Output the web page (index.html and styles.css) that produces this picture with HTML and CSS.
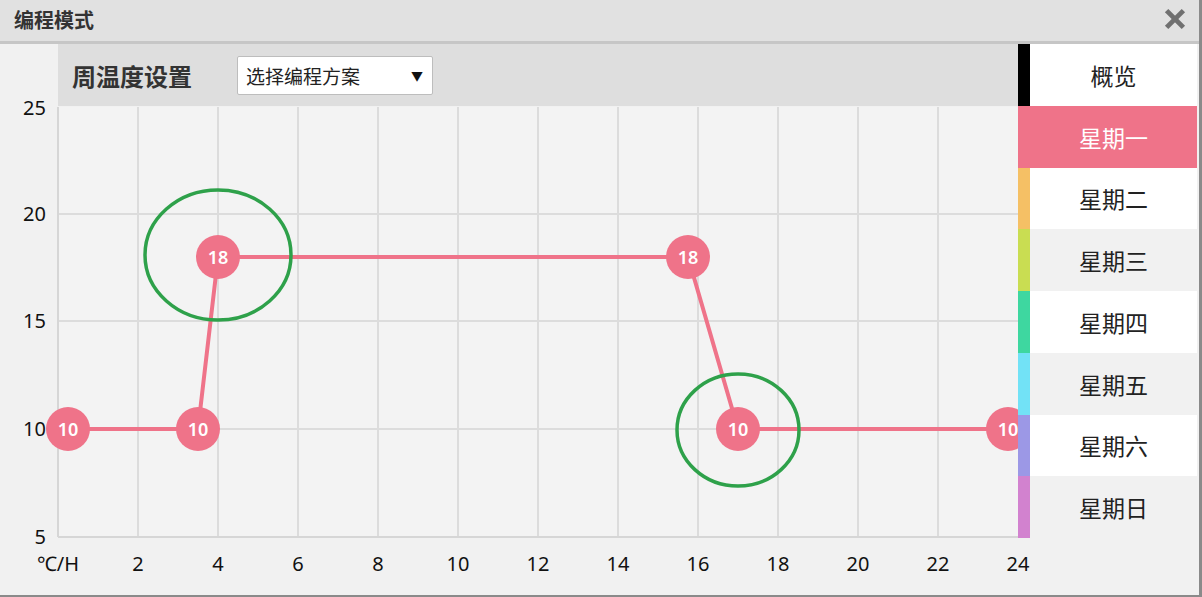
FILE: index.html
```html
<!DOCTYPE html>
<html lang="zh-CN">
<head>
  <meta charset="UTF-8">
  <title>编程模式</title>
  <link rel="stylesheet" href="styles.css">
</head>
<body>
  <div class="window">
    <!-- Title bar -->
    <div class="title-bar">
      <span class="title">编程模式</span>
      <a class="close-button">
        <svg viewBox="0 0 20 20" xmlns="http://www.w3.org/2000/svg">
          <line x1="3" y1="3" x2="17" y2="17" />
          <line x1="17" y1="3" x2="3" y2="17" />
        </svg>
      </a>
    </div>

    <div class="content">
      <div class="chart-area">
        <div class="chart-header">
          <span class="chart-title">周温度设置</span>
          <div class="plan-select">
            <span>选择编程方案</span>
            <span class="arrow">&#9660;</span>
          </div>
        </div>

        <svg class="chart" width="1018" height="489" viewBox="0 0 1018 489" xmlns="http://www.w3.org/2000/svg">
          <!-- plot background -->
          <rect x="58" y="1" width="960" height="430" fill="#f3f3f3" />

          <!-- grid: one vertical line per 2 hours -->
          <g class="grid">
            <line x1="138" y1="1" x2="138" y2="431" />
            <line x1="218" y1="1" x2="218" y2="431" />
            <line x1="298" y1="1" x2="298" y2="431" />
            <line x1="378" y1="1" x2="378" y2="431" />
            <line x1="458" y1="1" x2="458" y2="431" />
            <line x1="538" y1="1" x2="538" y2="431" />
            <line x1="618" y1="1" x2="618" y2="431" />
            <line x1="698" y1="1" x2="698" y2="431" />
            <line x1="778" y1="1" x2="778" y2="431" />
            <line x1="858" y1="1" x2="858" y2="431" />
            <line x1="938" y1="1" x2="938" y2="431" />
            <line x1="58" y1="108" x2="1018" y2="108" />
            <line x1="58" y1="215" x2="1018" y2="215" />
            <line x1="58" y1="323" x2="1018" y2="323" />
          </g>
          <g class="axis">
            <line x1="58" y1="1" x2="58" y2="431" />
            <line x1="58" y1="431" x2="1018" y2="431" />
          </g>

          <!-- y labels -->
          <g class="y-labels">
            <text x="46" y="9">25</text>
            <text x="46" y="115">20</text>
            <text x="46" y="222">15</text>
            <text x="46" y="330">10</text>
            <text x="46" y="438">5</text>
          </g>

          <!-- x labels -->
          <g class="x-labels">
            <text x="58" y="465">℃/H</text>
            <text x="138" y="465">2</text>
            <text x="218" y="465">4</text>
            <text x="298" y="465">6</text>
            <text x="378" y="465">8</text>
            <text x="458" y="465">10</text>
            <text x="538" y="465">12</text>
            <text x="618" y="465">14</text>
            <text x="698" y="465">16</text>
            <text x="778" y="465">18</text>
            <text x="858" y="465">20</text>
            <text x="938" y="465">22</text>
            <text x="1018" y="465">24</text>
          </g>

          <!-- temperature curve -->
          <polyline class="curve" points="68,323 198,323 218,151 688,151 738,323 1008,323" />

          <g class="point"><circle cx="68" cy="323" r="22" /><text x="68" y="330">10</text></g>
          <g class="point"><circle cx="198" cy="323" r="22" /><text x="198" y="330">10</text></g>
          <g class="point"><circle cx="218" cy="151" r="22" /><text x="218" y="158">18</text></g>
          <g class="point"><circle cx="688" cy="151" r="22" /><text x="688" y="158">18</text></g>
          <g class="point"><circle cx="738" cy="323" r="22" /><text x="738" y="330">10</text></g>
          <g class="point"><circle cx="1008" cy="323" r="22" /><text x="1008" y="330">10</text></g>

          <!-- highlight rings -->
          <ellipse class="mark" cx="218" cy="149" rx="73" ry="65" />
          <ellipse class="mark" cx="738" cy="324" rx="61" ry="56" />
        </svg>
      </div>

      <!-- day list -->
      <div class="days">
        <div class="day strip-all">概览</div>
        <div class="day active">星期一</div>
        <div class="day strip-tue">星期二</div>
        <div class="day alt strip-wed">星期三</div>
        <div class="day strip-thu">星期四</div>
        <div class="day alt strip-fri">星期五</div>
        <div class="day strip-sat">星期六</div>
        <div class="day alt strip-sun">星期日</div>
      </div>
    </div>
  </div>
</body>
</html>
```

FILE: styles.css
```css
* {
  margin: 0;
  padding: 0;
  box-sizing: border-box;
}

html, body {
  width: 1202px;
  height: 597px;
  overflow: hidden;
  background-color: #ffffff;
  font-family: "Noto Sans", "Noto Sans CJK SC", sans-serif;
  color: #222;
}

.window {
  width: 1202px;
  height: 597px;
  display: flex;
  flex-direction: column;
  background-color: #f1f1f1;
  border-right: 3px solid #8a8a8a;
  border-bottom: 2px solid #8a8a8a;
}

/* Title bar */
.title-bar {
  height: 44px;
  flex-shrink: 0;
  display: flex;
  align-items: center;
  justify-content: space-between;
  padding: 0 12px 3px 14px;
  background-color: #e1e1e1;
  border-bottom: 3px solid #c6c6c6;
}

.title {
  font-family: "Noto Sans CJK SC", sans-serif;
  font-size: 20px;
  font-weight: bold;
  color: #333;
}

.close-button {
  width: 24px;
  height: 24px;
  display: flex;
}

.close-button svg {
  width: 24px;
  height: 24px;
  stroke: #707070;
  stroke-width: 4;
  fill: none;
}

.content {
  flex: 1;
  display: flex;
}

.chart-area {
  width: 1018px;
  display: flex;
  flex-direction: column;
}

/* Header band above the plot */
.chart-header {
  height: 62px;
  margin-left: 58px;
  display: flex;
  align-items: center;
  gap: 45px;
  padding-left: 14px;
  background-color: #dedede;
}

.chart-title {
  font-family: "Noto Sans CJK SC", sans-serif;
  font-size: 24px;
  font-weight: bold;
  color: #333;
}

.plan-select {
  width: 196px;
  height: 39px;
  display: flex;
  align-items: center;
  justify-content: space-between;
  padding: 0 9px 0 8px;
  background-color: #ffffff;
  border: 1px solid #bdbdbd;
  border-radius: 2px;
  font-family: "Noto Sans CJK SC", sans-serif;
  font-size: 19px;
  color: #222;
}

.plan-select .arrow {
  font-size: 12px;
  color: #111;
}

.chart {
  display: block;
  overflow: visible;
}

.chart .grid line {
  stroke: #dcdcdc;
  stroke-width: 2;
}

.chart .axis line {
  stroke: #d6d6d6;
  stroke-width: 2;
}

.chart text {
  font-family: "Noto Sans", "Noto Sans CJK SC", sans-serif;
  font-size: 20px;
  fill: #111;
}

.y-labels text {
  text-anchor: end;
}

.x-labels text {
  text-anchor: middle;
}

.curve {
  fill: none;
  stroke: #ef7389;
  stroke-width: 4;
}

.point circle {
  fill: #ef7389;
}

.chart .point text {
  font-size: 18px;
  font-weight: 600;
  fill: #ffffff;
  text-anchor: middle;
}

.mark {
  fill: none;
  stroke: #2ea14a;
  stroke-width: 3.5;
}

/* Day list on the right */
.days {
  width: 179px;
  display: flex;
  flex-direction: column;
}

.day {
  height: 61.75px;
  display: flex;
  align-items: center;
  justify-content: center;
  background-color: #ffffff;
  border-left: 12px solid #fff;
  font-family: "Noto Sans CJK SC", sans-serif;
  font-size: 23px;
  color: #222;
}

.day.alt {
  background-color: #f1f1f1;
}

.day.active {
  background-color: #ef7389;
  border-left-color: #ef7389;
  color: #ffffff;
}

.strip-all { border-left-color: #000000; }
.strip-tue { border-left-color: #f5c065; }
.strip-wed { border-left-color: #c9dd52; }
.strip-thu { border-left-color: #3ed7a0; }
.strip-fri { border-left-color: #72e2f6; }
.strip-sat { border-left-color: #9c98e6; }
.strip-sun { border-left-color: #d282cf; }
```
